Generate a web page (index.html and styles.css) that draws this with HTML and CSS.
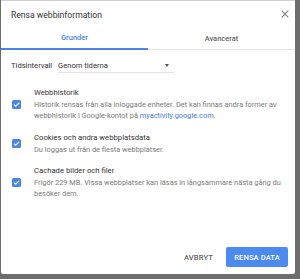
FILE: index.html
```html
<!DOCTYPE html>
<html lang="sv">
<head>
<meta charset="utf-8">
<link rel="stylesheet" href="styles.css">
</head>
<body>
<div class="dialog">
  <div class="header">
    <div class="title">Rensa webbinformation</div>
    <svg class="close" width="8" height="8" viewBox="0 0 8 8"><path d="M0.7 0.7L7.3 7.3M7.3 0.7L0.7 7.3" stroke="#7d7d7d" stroke-width="1.1"/></svg>
  </div>
  <div class="tabs">
    <div class="tab active">Grunder</div>
    <div class="tab">Avancerat</div>
  </div>
  <div class="range">
    <span class="label">Tidsintervall</span>
    <div class="select"><span>Genom tiderna</span><span class="arrow"></span></div>
  </div>
  <div class="items">
    <div class="item">
      <span class="check"><svg width="9" height="9" viewBox="0 0 9 9"><path d="M2 4.6L3.7 6.2L7.1 2.8" stroke="#fff" stroke-width="1.2" fill="none"/></svg></span>
      <div class="text">
        <div class="name">Webbhistorik</div>
        <div class="desc">Historik rensas från alla inloggade enheter. Det kan finnas andra former av webbhistorik i Google-kontot på <span class="link">myactivity.google.com</span>.</div>
      </div>
    </div>
    <div class="item">
      <span class="check"><svg width="9" height="9" viewBox="0 0 9 9"><path d="M2 4.6L3.7 6.2L7.1 2.8" stroke="#fff" stroke-width="1.2" fill="none"/></svg></span>
      <div class="text">
        <div class="name">Cookies och andra webbplatsdata</div>
        <div class="desc">Du loggas ut från de flesta webbplatser.</div>
      </div>
    </div>
    <div class="item">
      <span class="check"><svg width="9" height="9" viewBox="0 0 9 9"><path d="M2 4.6L3.7 6.2L7.1 2.8" stroke="#fff" stroke-width="1.2" fill="none"/></svg></span>
      <div class="text">
        <div class="name">Cachade bilder och filer</div>
        <div class="desc">Frigör 229 MB. Vissa webbplatser kan läsas in långsammare nästa gång du besöker dem.</div>
      </div>
    </div>
  </div>
  <div class="actions">
    <button class="btn cancel">AVBRYT</button>
    <button class="btn primary">RENSA DATA</button>
  </div>
</div>
</body>
</html>
```
FILE: styles.css
```css
html, body {
  margin: 0;
  padding: 0;
}
body {
  background: #6d6d6d;
  width: 300px;
  height: 279px;
  overflow: hidden;
  font-family: Roboto, "Noto Sans", sans-serif;
}
.dialog {
  margin-left: 1px;
  width: 294px;
  height: 274px;
  background: #fff;
  border-radius: 0 0 2px 2px;
  display: flex;
  flex-direction: column;
  box-sizing: border-box;
  border-top: 1px solid #cfcfcf;
}
.header {
  display: flex;
  justify-content: space-between;
  align-items: center;
  padding: 8px 6px 5px 10px;
  height: 12px;
}
.title {
  font-size: 8.6px;
  line-height: 12px;
  color: #333;
}
.close {
  margin-top: -2px;
}
.tabs {
  display: flex;
  border-bottom: 1px solid #e3e3e3;
  height: 23px;
}
.tab {
  flex: 1;
  display: flex;
  align-items: center;
  justify-content: center;
  font-size: 7.5px;
  color: #666;
  font-weight: 500;
  box-sizing: border-box;
  padding-top: 1px;
}
.tab.active {
  color: #4a86e8;
  border-bottom: 2px solid #4a86e8;
  margin-bottom: -1px;
}
.range {
  display: flex;
  align-items: flex-start;
  padding: 10px 0 0 10px;
}
.label {
  font-size: 7.6px;
  line-height: 11px;
  color: #333;
  width: 47px;
}
.select {
  width: 116px;
  display: flex;
  justify-content: space-between;
  align-items: center;
  font-size: 7.6px;
  line-height: 11px;
  color: #333;
  border-bottom: 1px solid #e3e3e3;
  padding-bottom: 1px;
}
.arrow {
  width: 0;
  height: 0;
  border-left: 2.5px solid transparent;
  border-right: 2.5px solid transparent;
  border-top: 3px solid #555;
  margin-right: 5px;
}
.items {
  display: flex;
  flex-direction: column;
  gap: 10px;
  padding: 14px 8px 0 11px;
}
.item {
  display: flex;
  align-items: center;
  gap: 13px;
}
.check {
  width: 9px;
  height: 9px;
  background: #4a86e8;
  border-radius: 1.5px;
  flex: none;
  display: flex;
}
.text {
  flex: 1;
}
.name {
  font-size: 7.7px;
  color: #333;
  line-height: 12px;
}
.desc {
  font-size: 7.4px;
  color: #7b7b7b;
  line-height: 11.3px;
}
.link {
  color: #4a7ad8;
}
.actions {
  margin-top: auto;
  display: flex;
  justify-content: flex-end;
  align-items: center;
  gap: 13px;
  padding: 0 7px 7px 0;
}
.btn {
  font-family: Roboto, "Noto Sans", sans-serif;
  font-size: 7.6px;
  font-weight: 500;
  border: none;
  background: none;
  padding: 0;
  letter-spacing: 0.1px;
}
.cancel {
  color: #666;
}
.primary {
  background: #4d8af0;
  color: #fff;
  width: 62px;
  height: 20px;
  border-radius: 2px;
}
```
